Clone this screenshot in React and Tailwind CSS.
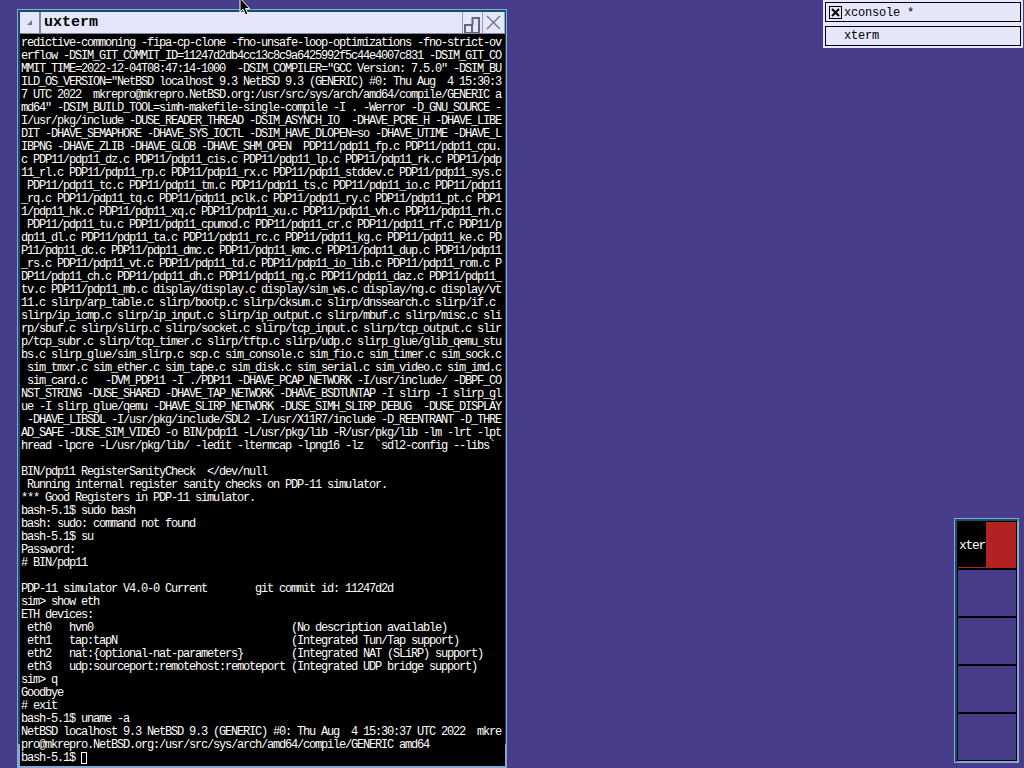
import React from 'react';

const termLines = [
  'redictive-commoning -fipa-cp-clone -fno-unsafe-loop-optimizations -fno-strict-ov',
  'erflow -DSIM_GIT_COMMIT_ID=11247d2db4cc13c8c9a6425992f5c44e4007c831 -DSIM_GIT_CO',
  'MMIT_TIME=2022-12-04T08:47:14-1000  -DSIM_COMPILER="GCC Version: 7.5.0" -DSIM_BU',
  'ILD_OS_VERSION="NetBSD localhost 9.3 NetBSD 9.3 (GENERIC) #0: Thu Aug  4 15:30:3',
  '7 UTC 2022  mkrepro@mkrepro.NetBSD.org:/usr/src/sys/arch/amd64/compile/GENERIC a',
  'md64" -DSIM_BUILD_TOOL=simh-makefile-single-compile -I . -Werror -D_GNU_SOURCE -',
  'I/usr/pkg/include -DUSE_READER_THREAD -DSIM_ASYNCH_IO  -DHAVE_PCRE_H -DHAVE_LIBE',
  'DIT -DHAVE_SEMAPHORE -DHAVE_SYS_IOCTL -DSIM_HAVE_DLOPEN=so -DHAVE_UTIME -DHAVE_L',
  'IBPNG -DHAVE_ZLIB -DHAVE_GLOB -DHAVE_SHM_OPEN  PDP11/pdp11_fp.c PDP11/pdp11_cpu.',
  'c PDP11/pdp11_dz.c PDP11/pdp11_cis.c PDP11/pdp11_lp.c PDP11/pdp11_rk.c PDP11/pdp',
  '11_rl.c PDP11/pdp11_rp.c PDP11/pdp11_rx.c PDP11/pdp11_stddev.c PDP11/pdp11_sys.c',
  ' PDP11/pdp11_tc.c PDP11/pdp11_tm.c PDP11/pdp11_ts.c PDP11/pdp11_io.c PDP11/pdp11',
  '_rq.c PDP11/pdp11_tq.c PDP11/pdp11_pclk.c PDP11/pdp11_ry.c PDP11/pdp11_pt.c PDP1',
  '1/pdp11_hk.c PDP11/pdp11_xq.c PDP11/pdp11_xu.c PDP11/pdp11_vh.c PDP11/pdp11_rh.c',
  ' PDP11/pdp11_tu.c PDP11/pdp11_cpumod.c PDP11/pdp11_cr.c PDP11/pdp11_rf.c PDP11/p',
  'dp11_dl.c PDP11/pdp11_ta.c PDP11/pdp11_rc.c PDP11/pdp11_kg.c PDP11/pdp11_ke.c PD',
  'P11/pdp11_dc.c PDP11/pdp11_dmc.c PDP11/pdp11_kmc.c PDP11/pdp11_dup.c PDP11/pdp11',
  '_rs.c PDP11/pdp11_vt.c PDP11/pdp11_td.c PDP11/pdp11_io_lib.c PDP11/pdp11_rom.c P',
  'DP11/pdp11_ch.c PDP11/pdp11_dh.c PDP11/pdp11_ng.c PDP11/pdp11_daz.c PDP11/pdp11_',
  'tv.c PDP11/pdp11_mb.c display/display.c display/sim_ws.c display/ng.c display/vt',
  '11.c slirp/arp_table.c slirp/bootp.c slirp/cksum.c slirp/dnssearch.c slirp/if.c ',
  'slirp/ip_icmp.c slirp/ip_input.c slirp/ip_output.c slirp/mbuf.c slirp/misc.c sli',
  'rp/sbuf.c slirp/slirp.c slirp/socket.c slirp/tcp_input.c slirp/tcp_output.c slir',
  'p/tcp_subr.c slirp/tcp_timer.c slirp/tftp.c slirp/udp.c slirp_glue/glib_qemu_stu',
  'bs.c slirp_glue/sim_slirp.c scp.c sim_console.c sim_fio.c sim_timer.c sim_sock.c',
  ' sim_tmxr.c sim_ether.c sim_tape.c sim_disk.c sim_serial.c sim_video.c sim_imd.c',
  ' sim_card.c   -DVM_PDP11 -I ./PDP11 -DHAVE_PCAP_NETWORK -I/usr/include/ -DBPF_CO',
  'NST_STRING -DUSE_SHARED -DHAVE_TAP_NETWORK -DHAVE_BSDTUNTAP -I slirp -I slirp_gl',
  'ue -I slirp_glue/qemu -DHAVE_SLIRP_NETWORK -DUSE_SIMH_SLIRP_DEBUG  -DUSE_DISPLAY',
  ' -DHAVE_LIBSDL -I/usr/pkg/include/SDL2 -I/usr/X11R7/include -D_REENTRANT -D_THRE',
  'AD_SAFE -DUSE_SIM_VIDEO -o BIN/pdp11 -L/usr/pkg/lib -R/usr/pkg/lib -lm -lrt -lpt',
  'hread -lpcre -L/usr/pkg/lib/ -ledit -ltermcap -lpng16 -lz  `sdl2-config --libs`',
  '',
  'BIN/pdp11 RegisterSanityCheck  </dev/null',
  ' Running internal register sanity checks on PDP-11 simulator.',
  '*** Good Registers in PDP-11 simulator.',
  'bash-5.1$ sudo bash',
  'bash: sudo: command not found',
  'bash-5.1$ su',
  'Password:',
  '# BIN/pdp11',
  '',
  'PDP-11 simulator V4.0-0 Current        git commit id: 11247d2d',
  'sim> show eth',
  'ETH devices:',
  ' eth0   hvn0                                 (No description available)',
  ' eth1   tap:tapN                             (Integrated Tun/Tap support)',
  ' eth2   nat:{optional-nat-parameters}        (Integrated NAT (SLiRP) support)',
  ' eth3   udp:sourceport:remotehost:remoteport (Integrated UDP bridge support)',
  'sim> q',
  'Goodbye',
  '# exit',
  'bash-5.1$ uname -a',
  'NetBSD localhost 9.3 NetBSD 9.3 (GENERIC) #0: Thu Aug  4 15:30:37 UTC 2022  mkre',
  'pro@mkrepro.NetBSD.org:/usr/src/sys/arch/amd64/compile/GENERIC amd64',
];

const mono = "font-['Liberation_Mono',monospace]";

const UxtermWindow = () => (
  <div className="absolute left-[17px] top-[9px] w-[490px] h-[759px] border border-[#84a9d2] bg-[#84a9d2]">
    <div className="w-full h-full flex flex-col border-l-2 border-t-2 border-r border-[#1b4d69]">
      {/* title bar */}
      <div className="h-[22px] shrink-0 flex bg-[#e6e6fa] border-b border-[#7f8a9c] mr-[1px]">
        <div className="w-[21px] flex items-center justify-center border-r-2 border-[#7f8a9c]">
          <svg width="7" height="7" viewBox="0 0 7 7">
            <path d="M6 1 V6 H1 Z" fill="#77778a" />
          </svg>
        </div>
        <div className={`flex-1 pl-[3px] text-[15px] leading-[22px] font-bold text-black ${mono}`}>uxterm</div>
        <div className="w-[21px] flex items-end justify-center border-l border-r border-[#9a9ab0]">
          <svg width="19" height="20" viewBox="0 0 19 20">
            <path d="M2 20 V12 H9 V20 M9.5 12 V5 H16 V20 H2" fill="none" stroke="#5f6778" strokeWidth="2" />
          </svg>
        </div>
        <div className="w-[21px] flex items-center justify-center">
          <svg width="17" height="17" viewBox="0 0 17 17">
            <path d="M2 2 L15 15 M15 2 L2 15" stroke="#70707e" strokeWidth="1.3" fill="none" />
          </svg>
        </div>
      </div>
      {/* terminal */}
      <div className={`flex-1 mb-[1px] bg-black text-white pt-[3px] pl-px overflow-hidden whitespace-pre text-[12px] leading-[13px] tracking-[-1.2px] ${mono}`}>
        {termLines.map((line, i) => (
          <div key={i} className="h-[13px]">{line}</div>
        ))}
        <div className="h-[13px] flex">
          <span>bash-5.1$ </span>
          <span className="w-[6px] h-[12px] border border-white" />
        </div>
      </div>
    </div>
    {/* lower frame corners turn light */}
    <div className="absolute left-0 top-[734px] w-[2px] h-[23px] bg-[#84a9d2]" />
    <div className="absolute right-0 top-[734px] w-px h-[23px] bg-[#84a9d2]" />
  </div>
);

const IconManager = () => (
  <div className={`absolute left-[823px] top-0 w-[200px] h-[48px] bg-[#e6e6fa] px-[2px] pt-[2px] flex flex-col gap-[4px] text-black text-[12px] leading-[18px] tracking-[-0.2px] ${mono}`}>
    <div className="h-[20px] w-[196px] border border-black flex items-center">
      <svg className="ml-[3px] mr-[2px]" width="13" height="13" viewBox="0 0 13 13">
        <rect x="0.5" y="0.5" width="12" height="12" fill="#e6e6fa" stroke="#000" />
        <path d="M3 3 L10 10 M10 3 L3 10" stroke="#000" strokeWidth="2" />
      </svg>
      <span className="pt-[2px]">xconsole *</span>
    </div>
    <div className="h-[20px] w-[196px] border border-black pl-[18px]">xterm</div>
  </div>
);

const Pager = () => (
  <div className="absolute left-[954px] top-[518px] w-[65px] h-[245px] border border-[#84a9d2] bg-[#84a9d2]">
    <div className="w-full h-full border-l-2 border-t-2 border-[#1b4d69] pr-px pb-px">
      <div className="w-full h-full bg-black flex flex-col gap-[2px] p-px">
        <div className="h-[46px] flex bg-black">
          <div className={`w-[28px] h-full pl-[1px] border-b border-[#b22222] text-white text-[13px] leading-[48px] tracking-[-1.3px] overflow-hidden ${mono}`}>xter</div>
          <div className="flex-1 bg-[#b22222]" />
        </div>
        <div className="flex-1 bg-[#483d8b]" />
        <div className="flex-1 bg-[#483d8b]" />
        <div className="flex-1 bg-[#483d8b]" />
        <div className="flex-1 bg-[#483d8b]" />
      </div>
    </div>
  </div>
);

const MousePointer = () => (
  <svg className="absolute left-[239px] top-0" width="13" height="17" viewBox="0 0 13 17">
    <path d="M1 -2 V12 L4 9 L6.5 15 L9 14 L6.5 8.5 H10.5 Z" fill="#000" stroke="#fff" strokeWidth="1" />
  </svg>
);

export default function App() {
  return (
    <div className="relative w-[1024px] h-[768px] overflow-hidden bg-[#483d8b]">
      <UxtermWindow />
      <IconManager />
      <Pager />
      <MousePointer />
    </div>
  );
}
